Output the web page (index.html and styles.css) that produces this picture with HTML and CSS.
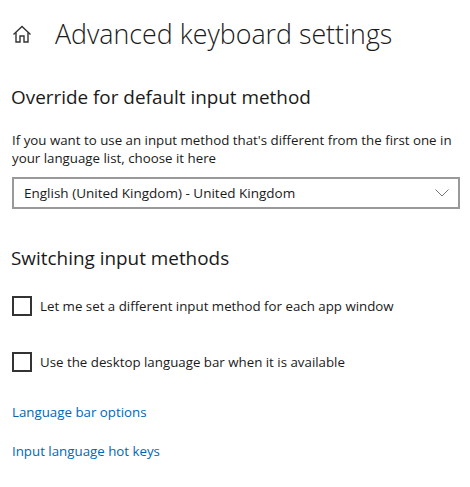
FILE: index.html
```html
<!DOCTYPE html>
<html lang="en-GB">
  <head>
    <title>Advanced keyboard settings</title>
    <meta charset="UTF-8">
    <link rel="stylesheet" href="styles.css">
  </head>
  <body>
    <div class="page-header">
      <svg class="home-icon" viewBox="0 0 20 20" width="20" height="20" fill="none" stroke="#333" stroke-width="1.4">
        <path d="M1.5 10.5 L10 2.5 L18.500 10.500"/>
        <path d="M4 8.500 V18 H8 V12 H12 V18 H16 V8.500"/>
      </svg>
      <h1>Advanced keyboard settings</h1>
    </div>

    <h2 class="first-heading">Override for default input method</h2>
    <p class="hint">If you want to use an input method that's different from the first one in your language list, choose it here</p>
    <div class="dropdown">
      <span>English (United Kingdom) - United Kingdom</span>
      <svg viewBox="0 0 14 8" width="14" height="8" fill="none" stroke="#777" stroke-width="1">
        <path d="M0.500 0.500 L7 7 L13.500 0.500"/>
      </svg>
    </div>

    <h2 class="second-heading">Switching input methods</h2>
    <label class="check-row">
      <span class="checkbox"></span>
      <span>Let me set a different input method for each app window</span>
    </label>
    <label class="check-row">
      <span class="checkbox"></span>
      <span>Use the desktop language bar when it is available</span>
    </label>

    <div class="links">
      <a href="#">Language bar options</a>
      <a href="#">Input language hot keys</a>
    </div>
  </body>
</html>
```

FILE: styles.css
```css
body {
	margin: 0;
	padding: 0 10px 0 12px;
	background: #fff;
	color: #1a1a1a;
	font-family: "Open Sans", sans-serif;
	font-size: 13.3px;
}
a {
	color: #0067b8;
	text-decoration: none;
}
.page-header {
	display: flex;
	align-items: center;
	gap: 23px;
	height: 38px;
	margin-top: 15px;
}
.home-icon {
	flex: none;
}
h1 {
	margin: 0;
	font-size: 26.8px;
	font-weight: 300;
	line-height: 38px;
	white-space: nowrap;
}
h2 {
	margin: 0;
	font-size: 18.9px;
	font-weight: 400;
	line-height: 26px;
	margin-left: -1px;
}
.first-heading {
	margin-top: 31px;
}
.second-heading {
	margin-top: 36px;
}
.hint {
	margin: 21px 0 0;
	line-height: 18px;
}
.dropdown {
	display: flex;
	justify-content: space-between;
	align-items: center;
	box-sizing: border-box;
	height: 32px;
	margin-top: 10px;
	padding: 0 9px 0 10px;
	border: 2px solid #999;
	font-size: 13.5px;
}
.check-row {
	display: flex;
	align-items: center;
	gap: 8px;
	height: 20px;
	margin-top: 36px;
}
.second-heading + .check-row {
	margin-top: 25px;
}
.checkbox {
	box-sizing: border-box;
	width: 20px;
	height: 20px;
	border: 2px solid #333;
}
.links {
	display: flex;
	flex-direction: column;
	gap: 20px;
	margin-top: 31px;
}
.links a {
	line-height: 19px;
}
```
